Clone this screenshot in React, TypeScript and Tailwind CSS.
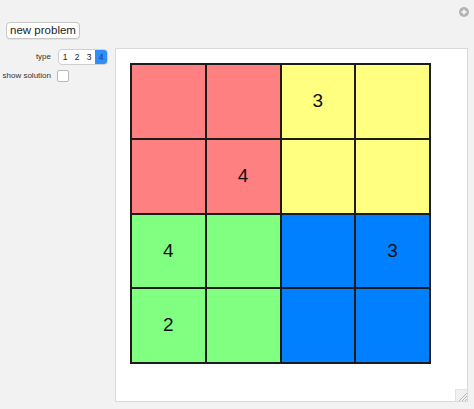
import React from 'react';

const cells = [
  { c: 'bg-[#ff8080]', n: '' },
  { c: 'bg-[#ff8080]', n: '' },
  { c: 'bg-[#ffff80]', n: '3' },
  { c: 'bg-[#ffff80]', n: '' },
  { c: 'bg-[#ff8080]', n: '' },
  { c: 'bg-[#ff8080]', n: '4' },
  { c: 'bg-[#ffff80]', n: '' },
  { c: 'bg-[#ffff80]', n: '' },
  { c: 'bg-[#80ff80]', n: '4' },
  { c: 'bg-[#80ff80]', n: '' },
  { c: 'bg-[#0080ff]', n: '' },
  { c: 'bg-[#0080ff]', n: '3' },
  { c: 'bg-[#80ff80]', n: '2' },
  { c: 'bg-[#80ff80]', n: '' },
  { c: 'bg-[#0080ff]', n: '' },
  { c: 'bg-[#0080ff]', n: '' },
];

export default function App() {
  return (
    <div className="w-[474px] h-[409px] bg-[#f2f2f2] flex flex-col font-['Liberation_Sans',Arial,sans-serif] text-[#222]">
      {/* top strip with the plus icon */}
      <div className="h-[22px] flex justify-end items-start pt-[7px] pr-[5px]">
        <svg width="10" height="10" viewBox="0 0 10 10">
          <circle cx="5" cy="5" r="5" fill="#b4b4b4" />
          <path d="M5 2.5v5M2.5 5h5" stroke="#fff" strokeWidth="1.4" />
        </svg>
      </div>

      <div className="flex pl-[6px] h-[17px]">
        <button className="w-[74px] h-[17px] flex items-center justify-center bg-white border border-[#c6c6c6] rounded-[4px] text-[11.5px] leading-none text-[#222] shadow-[0_1px_0_rgba(0,0,0,0.06)]">
          new problem
        </button>
      </div>

      <div className="flex mt-[9px]">
        <div className="w-[115px] flex flex-col gap-[5px] pt-[1px]">
          <div className="flex items-center h-[16px]">
            <span className="w-[51px] text-right text-[8px] text-[#333]">type</span>
            <div className="ml-[7px] flex h-[16px] border border-[#cfcfcf] rounded-[4px] overflow-hidden bg-white text-[8.5px]">
              <span className="w-[12px] flex items-center justify-center">1</span>
              <span className="w-[12px] flex items-center justify-center">2</span>
              <span className="w-[12px] flex items-center justify-center">3</span>
              <span className="w-[12px] flex items-center justify-center bg-[#2f8df6] text-[#123f8a]">4</span>
            </div>
          </div>
          <div className="flex items-center h-[12px]">
            <span className="w-[51px] text-right text-[8px] text-[#333] whitespace-nowrap">show solution</span>
            <div className="ml-[6px] w-[12px] h-[12px] bg-white border border-[#b9b9b9] rounded-[2px]" />
          </div>
        </div>

        <div className="relative w-[353px] h-[354px] bg-white border border-[#dadada] p-[14px]">
          <div className="w-[301px] h-[301px] grid grid-cols-4 grid-rows-4 gap-[2px] bg-[#1c1c1c] border-2 border-[#1c1c1c]">
            {cells.map((cell, i) => (
              <div key={i} className={`${cell.c} flex items-center justify-center text-[19px] text-[#111]`}>
                {cell.n}
              </div>
            ))}
          </div>
          {/* resize grip */}
          <div className="absolute right-0 bottom-0 w-[12px] h-[12px] bg-[#f0f0f0] border-l border-t border-[#e2e2e2]">
            <svg width="12" height="12" viewBox="0 0 12 12">
              <path d="M3 11L11 3M6 11L11 6M9 11L11 9" stroke="#a8a8a8" strokeWidth="0.8" />
            </svg>
          </div>
        </div>
      </div>
    </div>
  );
}
